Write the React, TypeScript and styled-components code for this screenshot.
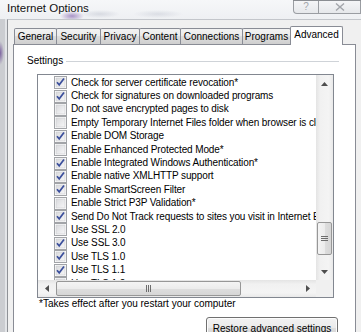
import React from 'react';
import styled, { createGlobalStyle } from 'styled-components';

const GlobalStyle = createGlobalStyle`
  html, body {
    margin: 0;
    padding: 0;
  }
  body {
    font-family: "Liberation Sans", Arial, sans-serif;
    font-size: 10px;
    color: #000;
  }
`;

interface TabInfo {
  label: string;
  width: number;
  selected?: boolean;
}

const tabs: TabInfo[] = [
  { label: 'General', width: 43 },
  { label: 'Security', width: 45 },
  { label: 'Privacy', width: 40 },
  { label: 'Content', width: 42 },
  { label: 'Connections', width: 63 },
  { label: 'Programs', width: 49 },
  { label: 'Advanced', width: 53, selected: true },
];

interface Setting {
  label: string;
  checked: boolean;
}

const settings: Setting[] = [
  { label: 'Check for server certificate revocation*', checked: true },
  { label: 'Check for signatures on downloaded programs', checked: true },
  { label: 'Do not save encrypted pages to disk', checked: false },
  { label: 'Empty Temporary Internet Files folder when browser is closed', checked: false },
  { label: 'Enable DOM Storage', checked: true },
  { label: 'Enable Enhanced Protected Mode*', checked: false },
  { label: 'Enable Integrated Windows Authentication*', checked: true },
  { label: 'Enable native XMLHTTP support', checked: true },
  { label: 'Enable SmartScreen Filter', checked: true },
  { label: 'Enable Strict P3P Validation*', checked: false },
  { label: 'Send Do Not Track requests to sites you visit in Internet Explorer', checked: true },
  { label: 'Use SSL 2.0', checked: false },
  { label: 'Use SSL 3.0', checked: true },
  { label: 'Use TLS 1.0', checked: true },
  { label: 'Use TLS 1.1', checked: true },
  { label: 'Use TLS 1.2', checked: false },
];

export default function App(): JSX.Element {
  return (
    <>
      <GlobalStyle />
      <Window>
        <TitleBar>
          <Title>Internet Options</Title>
          <CaptionButtons>
            <CaptionButton $width={26}>?</CaptionButton>
            <CaptionButton $width={42} $close>
              <svg width="10" height="8" viewBox="0 0 10 8">
                <path d="M1 0.5 L9 7.5 M9 0.5 L1 7.5" stroke="#a3a6ab" strokeWidth="1.4" fill="none" />
              </svg>
            </CaptionButton>
          </CaptionButtons>
        </TitleBar>
        <FrameBody>
          <FrameEdge />
          <Client>
            <TabStrip>
              {tabs.map((t) => (
                <Tab key={t.label} $width={t.width} $selected={!!t.selected}>
                  {t.label}
                </Tab>
              ))}
            </TabStrip>
            <TabPage>
              <GroupHeader>
                <GroupLabel>Settings</GroupLabel>
                <GroupLine />
              </GroupHeader>
              <ListBox>
                <ListContent>
                  {settings.map((s) => (
                    <Row key={s.label}>
                      <CheckBox checked={s.checked} />
                      <RowLabel>{s.label}</RowLabel>
                    </Row>
                  ))}
                </ListContent>
                <VScroll>
                  <ArrowButton>
                    <Arrow dir="up" />
                  </ArrowButton>
                  <VTrack>
                    <VThumb $offset={130} $size={33}>
                      <svg width="7" height="7" viewBox="0 0 7 7">
                        <path d="M0 1.5 H7 M0 3.5 H7 M0 5.5 H7" stroke="#6d6d6d" strokeWidth="1" />
                      </svg>
                    </VThumb>
                  </VTrack>
                  <ArrowButton>
                    <Arrow dir="down" />
                  </ArrowButton>
                </VScroll>
                <HScroll>
                  <ArrowButton>
                    <Arrow dir="left" />
                  </ArrowButton>
                  <HTrack>
                    <HThumb $offset={0} $size={185}>
                      <svg width="7" height="7" viewBox="0 0 7 7">
                        <path d="M1.5 0 V7 M3.5 0 V7 M5.5 0 V7" stroke="#6d6d6d" strokeWidth="1" />
                      </svg>
                    </HThumb>
                  </HTrack>
                  <ArrowButton>
                    <Arrow dir="right" />
                  </ArrowButton>
                </HScroll>
                <Corner />
              </ListBox>
              <Footnote>*Takes effect after you restart your computer</Footnote>
              <PushButton>Restore advanced settings</PushButton>
            </TabPage>
          </Client>
        </FrameBody>
      </Window>
    </>
  );
}

function CheckBox({ checked }: { checked: boolean }): JSX.Element {
  return (
    <svg width="13" height="13" viewBox="0 0 13 13">
      <defs>
        <linearGradient id="cbfill" x1="0" y1="0" x2="1" y2="1">
          <stop offset="0" stopColor="#d9dadd" />
          <stop offset="1" stopColor="#f7f7f8" />
        </linearGradient>
      </defs>
      <rect x="0.5" y="0.5" width="12" height="12" fill="#fff" stroke="#a2a4a8" />
      <rect x="2" y="2" width="9" height="9" fill="url(#cbfill)" stroke="#c8cace" strokeWidth="0.6" />
      {checked && (
        <path d="M3 6.2 L5.2 8.8 L10 2.6" stroke="#3b4f9c" strokeWidth="1.7" fill="none" />
      )}
    </svg>
  );
}

function Arrow({ dir }: { dir: 'up' | 'down' | 'left' | 'right' }): JSX.Element {
  const paths = {
    up: 'M0 4 L3.5 0 L7 4 Z',
    down: 'M0 0 L7 0 L3.5 4 Z',
    left: 'M4 0 L4 7 L0 3.5 Z',
    right: 'M0 0 L4 3.5 L0 7 Z',
  };
  const vertical = dir === 'up' || dir === 'down';
  return (
    <svg width={vertical ? 7 : 4} height={vertical ? 4 : 7} viewBox={vertical ? '0 0 7 4' : '0 0 4 7'}>
      <path d={paths[dir]} fill="#4e4e4e" />
    </svg>
  );
}

const Window = styled.div`
  width: 361px;
  height: 332px;
  overflow: hidden;
  display: flex;
  flex-direction: column;
  background: #f0f0f0;
`;

const TitleBar = styled.div`
  height: 19px;
  flex: none;
  display: flex;
  justify-content: space-between;
  align-items: flex-start;
  background:
    radial-gradient(ellipse 12px 5px at 72px 16px, rgba(110, 70, 160, 0.55), transparent),
    radial-gradient(ellipse 20px 4px at 100px 14px, rgba(170, 175, 190, 0.35), transparent),
    radial-gradient(ellipse 25px 4px at 158px 14px, rgba(170, 175, 190, 0.3), transparent),
    linear-gradient(#f6f7f9, #eef0f3);
`;

const Title = styled.div`
  font-size: 11.5px;
  line-height: 14px;
  padding: 1px 0 0 7px;
  color: #111;
  text-shadow: 0 0 4px #fff;
`;

const CaptionButtons = styled.div`
  display: flex;
  border-top: 1px solid #8a8d92;
`;

const CaptionButton = styled.div<{ $width: number; $close?: boolean }>`
  width: ${({ $width }): number => $width}px;
  height: 13px;
  box-sizing: border-box;
  display: flex;
  align-items: center;
  justify-content: center;
  border: 1px solid #9a9da2;
  border-top: none;
  border-left: ${({ $close }): string => ($close ? 'none' : '1px solid #9a9da2')};
  border-radius: ${({ $close }): string => ($close ? '0' : '0 0 0 4px')};
  background: linear-gradient(#f4f5f7, #e6e8eb);
  color: #a3a6ab;
  font-size: 10px;
  line-height: 10px;
`;

const FrameBody = styled.div`
  flex: 1;
  display: flex;
  min-height: 0;
`;

const FrameEdge = styled.div`
  width: 7px;
  flex: none;
  background:
    radial-gradient(ellipse 4px 12px at 0 34px, rgba(95, 60, 140, 0.75), transparent),
    linear-gradient(to right, #cbcdd1 0, #cbcdd1 5px, #e3e5e8 5px, #e3e5e8 7px);
`;

const Client = styled.div`
  flex: 1;
  display: flex;
  flex-direction: column;
  border-left: 1px solid #8f9297;
  border-top: 1px solid #c3c6cb;
  padding: 6px 0 0 5px;
  background: #f0f0f0;
`;

const TabStrip = styled.div`
  display: flex;
  align-items: flex-end;
  height: 18px;
  padding-left: 1px;
`;

const Tab = styled.div<{ $width: number; $selected: boolean }>`
  position: relative;
  z-index: ${({ $selected }): number => ($selected ? 2 : 1)};
  box-sizing: border-box;
  width: ${({ $width }): number => $width}px;
  height: ${({ $selected }): number => ($selected ? 19 : 16)}px;
  margin-right: -1px;
  margin-bottom: ${({ $selected }): number => ($selected ? -1 : 0)}px;
  border: 1px solid #898c95;
  border-bottom: none;
  border-radius: 2px 2px 0 0;
  background: ${({ $selected }): string =>
    $selected ? '#fff' : 'linear-gradient(#f2f2f2 0%, #ebebeb 45%, #dddddd 50%, #cfcfcf 100%)'};
  display: flex;
  align-items: ${({ $selected }): string => ($selected ? 'flex-start' : 'center')};
  padding-top: ${({ $selected }): number => ($selected ? 2 : 0)}px;
  justify-content: center;
  font-size: 10px;
  line-height: 12px;
  white-space: nowrap;
`;

const TabPage = styled.div`
  width: 343px;
  box-sizing: border-box;
  height: 310px;
  flex: none;
  border: 1px solid #898c95;
  background: #fff;
  display: flex;
  flex-direction: column;
`;

const GroupHeader = styled.div`
  display: flex;
  align-items: center;
  margin: 10px 16px 0 13px;
  height: 12px;
`;

const GroupLabel = styled.span`
  font-size: 10px;
  line-height: 12px;
`;

const GroupLine = styled.div`
  flex: 1;
  height: 1px;
  margin-left: 3px;
  background: #cfd3d8;
`;

const ListBox = styled.div`
  margin: 7px 0 0 23px;
  width: 297px;
  height: 224px;
  flex: none;
  box-sizing: border-box;
  border: 1px solid #828790;
  display: grid;
  grid-template-columns: minmax(0, 1fr) 17px;
  grid-template-rows: minmax(0, 1fr) 17px;
  background: #fff;
`;

const ListContent = styled.div`
  overflow: hidden;
  padding-top: 1px;
  min-width: 0;
  min-height: 0;
`;

const Row = styled.div`
  height: 13.4px;
  display: flex;
  align-items: center;
  padding-left: 16px;
  gap: 4px;
  white-space: nowrap;

  svg {
    flex: none;
  }
`;

const RowLabel = styled.span`
  font-size: 10px;
  line-height: 12px;
  letter-spacing: -0.12px;
`;

const VScroll = styled.div`
  display: flex;
  flex-direction: column;
  min-height: 0;
  background: linear-gradient(to right, #e4e4e4, #f1f1f1 25%, #f4f4f4 75%, #e9e9e9);
`;

const HScroll = styled.div`
  display: flex;
  min-width: 0;
  background: linear-gradient(#e4e4e4, #f1f1f1 25%, #f4f4f4 75%, #e9e9e9);
`;

const ArrowButton = styled.div`
  width: 17px;
  height: 17px;
  flex: none;
  display: flex;
  align-items: center;
  justify-content: center;
`;

const VTrack = styled.div`
  flex: 1;
  display: flex;
  flex-direction: column;
  align-items: center;
`;

const HTrack = styled.div`
  flex: 1;
  display: flex;
  align-items: center;
  padding-left: 1px;
`;

const thumbSkin = `
  box-sizing: border-box;
  border: 1px solid #979797;
  border-radius: 2px;
  display: flex;
  align-items: center;
  justify-content: center;
  flex: none;
`;

const VThumb = styled.div<{ $offset: number; $size: number }>`
  ${thumbSkin}
  width: 15px;
  height: ${({ $size }): number => $size}px;
  margin-top: ${({ $offset }): number => $offset}px;
  background: linear-gradient(to right, #f4f4f4, #ececec 50%, #dedede 51%, #d6d6d6);
`;

const HThumb = styled.div<{ $offset: number; $size: number }>`
  ${thumbSkin}
  height: 15px;
  width: ${({ $size }): number => $size}px;
  margin-left: ${({ $offset }): number => $offset}px;
  background: linear-gradient(#f4f4f4, #ececec 50%, #dedede 51%, #d6d6d6);
`;

const Corner = styled.div`
  background: #f0f0f0;
`;

const Footnote = styled.div`
  margin: 0 0 0 25px;
  font-size: 10px;
  line-height: 12px;
`;

const PushButton = styled.div`
  align-self: flex-end;
  margin: 7px 17px 0 0;
  width: 132px;
  height: 23px;
  box-sizing: border-box;
  border: 1px solid #707070;
  border-radius: 3px;
  background: linear-gradient(#f2f2f2 0%, #ebebeb 45%, #dddddd 50%, #cfcfcf 100%);
  box-shadow: inset 0 0 0 1px #fcfcfc;
  display: flex;
  align-items: center;
  justify-content: center;
  font-size: 10px;
  line-height: 12px;
`;
